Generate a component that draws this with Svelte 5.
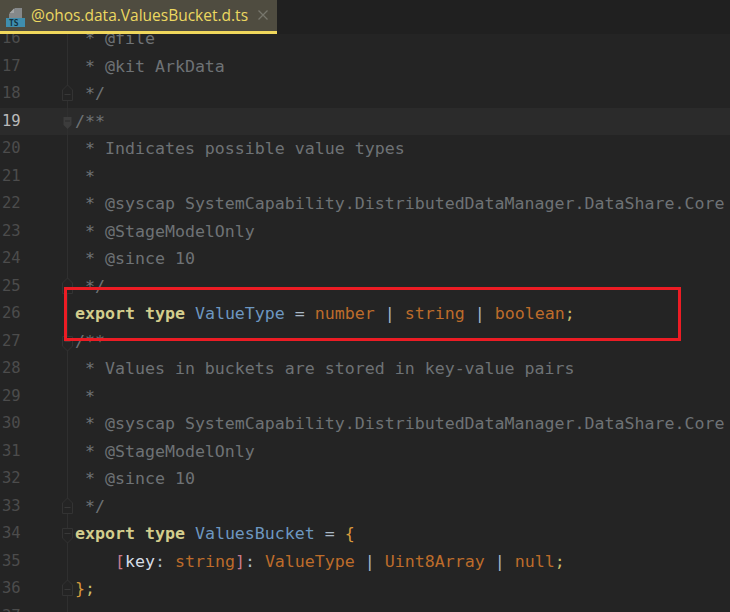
<script lang="ts">
	type Token = [string, string];

	const comment = 'cm';
	const lines: { n: number; code: Token[]; fold?: 'start' | 'end'; active?: boolean }[] = [
		{ n: 16, code: [[' * @file', comment]] },
		{ n: 17, code: [[' * @kit ArkData', comment]] },
		{ n: 18, code: [[' */', comment]], fold: 'end' },
		{ n: 19, code: [['/**', comment]], fold: 'start', active: true },
		{ n: 20, code: [[' * Indicates possible value types', comment]] },
		{ n: 21, code: [[' *', comment]] },
		{ n: 22, code: [[' * @syscap SystemCapability.DistributedDataManager.DataShare.Core', comment]] },
		{ n: 23, code: [[' * @StageModelOnly', comment]] },
		{ n: 24, code: [[' * @since 10', comment]] },
		{ n: 25, code: [[' */', comment]], fold: 'end' },
		{
			n: 26,
			code: [
				['export type', 'kw'],
				[' ', ''],
				['ValueType', 'ty'],
				[' = ', 'op'],
				['number', 'tn'],
				[' | ', 'op'],
				['string', 'tn'],
				[' | ', 'op'],
				['boolean', 'tn'],
				[';', 'pn']
			]
		},
		{ n: 27, code: [['/**', comment]], fold: 'start' },
		{ n: 28, code: [[' * Values in buckets are stored in key-value pairs', comment]] },
		{ n: 29, code: [[' *', comment]] },
		{ n: 30, code: [[' * @syscap SystemCapability.DistributedDataManager.DataShare.Core', comment]] },
		{ n: 31, code: [[' * @StageModelOnly', comment]] },
		{ n: 32, code: [[' * @since 10', comment]] },
		{ n: 33, code: [[' */', comment]], fold: 'end' },
		{
			n: 34,
			code: [
				['export type', 'kw'],
				[' ', ''],
				['ValuesBucket', 'ty'],
				[' = ', 'op'],
				['{', 'br']
			],
			fold: 'start'
		},
		{
			n: 35,
			code: [
				['    ', ''],
				['[', 'sq'],
				['key', 'id'],
				[': ', 'op'],
				['string', 'tn'],
				[']', 'sq'],
				[': ', 'op'],
				['ValueType', 'tn'],
				[' | ', 'op'],
				['Uint8Array', 'tn'],
				[' | ', 'op'],
				['null', 'tn'],
				[';', 'pn']
			]
		},
		{ n: 36, code: [['}', 'br'], [';', 'pn']], fold: 'end' },
		{ n: 37, code: [] }
	];
</script>

<div class="ide">
	<div class="tabs">
		<div class="tab">
			<svg class="ts-icon" width="20" height="24" viewBox="0 0 20 24">
				<path d="M9 5 H16 V15 H3 V11 Z" fill="#85888a" />
				<path d="M3.5 10 L8 5.5 V10 Z" fill="#a3a5a6" />
				<rect x="0" y="15" width="19" height="9" fill="#3f8eae" />
				<text x="3" y="23" class="ts-label">TS</text>
			</svg>
			<span class="tab-name">@ohos.data.ValuesBucket.d.ts</span>
			<svg class="close" width="12" height="12" viewBox="0 0 12 12">
				<path d="M1.5 1.5 L10.5 10.5 M10.5 1.5 L1.5 10.5" stroke="#77766c" stroke-width="1.3" fill="none" />
			</svg>
		</div>
	</div>

	<div class="editor">
		<div class="rows">
			{#each lines as line}
				<div class="row" class:active={line.active}>
					<span class="num">{line.n}</span>
					<span class="fold">
						<svg width="13" height="28" viewBox="0 0 13 28">
							<line x1="5.5" y1="0" x2="5.5" y2="28" stroke="#2f2f2f" />
							{#if line.active}
								<path d="M1.5 9 H9.5 V17 L5.5 21 L1.5 17 Z" fill="#3c3c3c" />
								<line x1="3" y1="13" x2="8" y2="13" stroke="#2b2b2b" />
							{:else if line.fold === 'start'}
								<path d="M0.5 8.5 H10.5 V18 L5.5 23 L0.5 18 Z" fill="#242424" stroke="#333333" />
								<line x1="2.5" y1="13.5" x2="8.5" y2="13.5" stroke="#383838" />
							{:else if line.fold === 'end'}
								<path d="M0.5 20.5 H10.5 V10 L5.5 5 L0.5 10 Z" fill="#242424" stroke="#333333" />
								<line x1="2.5" y1="14.5" x2="8.5" y2="14.5" stroke="#383838" />
							{/if}
						</svg>
					</span>
					<code class="code">{#each line.code as [text, kind]}<span class={kind}>{text}</span>{/each}</code>
				</div>
			{/each}
		</div>

		<div class="highlight-box"></div>
	</div>
</div>

<style>
	:global(body) {
		margin: 0;
		background: #242424;
		overflow: hidden;
	}
	.ide {
		width: 730px;
		height: 612px;
		display: flex;
		flex-direction: column;
		overflow: hidden;
		background: #242424;
	}
	.tabs {
		display: flex;
		flex: none;
		height: 34px;
		position: relative;
		z-index: 1;
		background: #202020;
	}
	.tab {
		width: 277px;
		box-sizing: border-box;
		display: flex;
		align-items: center;
		gap: 5px;
		padding: 0 0 1px 6px;
		background: #4f4c40;
		border-bottom: 3px solid #f0d75c;
	}
	.ts-icon {
		flex: none;
	}
	.ts-label {
		font: 700 8px "DejaVu Sans Mono", monospace;
		fill: #14323f;
	}
	.tab-name {
		font: 15.5px "Open Sans", sans-serif;
		color: #ecd860;
		white-space: nowrap;
	}
	.close {
		flex: none;
		margin-left: 4px;
	}
	.editor {
		flex: 1;
		position: relative;
		overflow: hidden;
	}
	.rows {
		margin-top: -8.75px;
	}
	.row {
		display: flex;
		height: 27.5px;
		font: 16.6px/27.5px "DejaVu Sans Mono", monospace;
		white-space: pre;
	}
	.row.active {
		background: #2b2b2b;
	}
	.num {
		flex: none;
		width: 62px;
		box-sizing: border-box;
		padding-left: 2px;
		color: #4c4c4c;
		font-size: 15.5px;
	}
	.active .num {
		color: #b9b9b9;
	}
	.fold {
		flex: none;
		width: 13px;
		height: 27.5px;
		overflow: hidden;
	}
	.fold svg {
		display: block;
	}
	.code {
		font: inherit;
	}
	.cm {
		color: #6e7275;
	}
	.kw {
		font-weight: 700;
		color: #d3cd8c;
	}
	.ty {
		color: #6d97c0;
	}
	.op {
		color: #a9b7c6;
	}
	.tn {
		color: #bd6c2b;
	}
	.pn {
		color: #c8bc6c;
	}
	.br {
		color: #d99a3c;
	}
	.sq {
		color: #c77a8b;
	}
	.id {
		color: #d6dde6;
	}
	.highlight-box {
		position: absolute;
		left: 64px;
		top: 253px;
		width: 617px;
		height: 54px;
		box-sizing: border-box;
		border: 3px solid #ec1c24;
	}
</style>
